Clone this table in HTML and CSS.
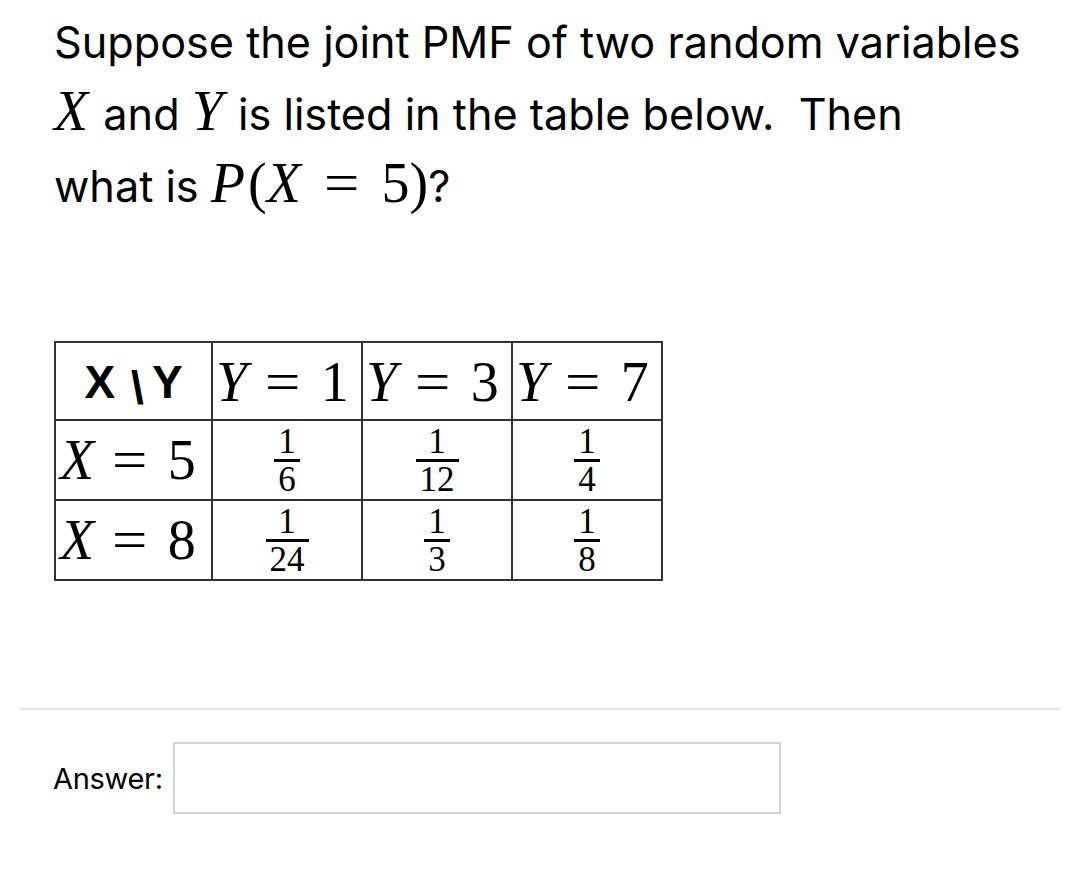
FILE: index.html
```html
<!DOCTYPE html>
<html>
<head>
<meta charset="utf-8">
<link rel="stylesheet" href="styles.css">
</head>
<body>
<div class="question">
  <p class="prompt">Suppose the joint PMF of two random variables <span class="m">X</span> and <span class="m">Y</span> is listed in the table below.&nbsp; Then <span class="ask">what is <span class="m">P</span><span class="mr">(</span><span class="m">X</span><span class="eq">=</span><span class="mr">5)</span>?</span></p>
  <table class="pmf">
    <colgroup>
      <col class="c1"><col class="c2"><col class="c3"><col class="c4">
    </colgroup>
    <tr>
      <th class="corner"><span class="cx">X</span><span class="bs">\</span><span>Y</span></th>
      <th class="colh"><span class="m">Y</span><span class="eq">=</span><span class="mr">1</span></th>
      <th class="colh"><span class="m">Y</span><span class="eq">=</span><span class="mr">3</span></th>
      <th class="colh"><span class="m">Y</span><span class="eq">=</span><span class="mr">7</span></th>
    </tr>
    <tr>
      <td class="rowh"><span class="m">X</span><span class="eq">=</span><span class="mr">5</span></td>
      <td><span class="frac"><span class="num">1</span><span class="den">6</span></span></td>
      <td><span class="frac"><span class="num">1</span><span class="den">12</span></span></td>
      <td><span class="frac"><span class="num">1</span><span class="den">4</span></span></td>
    </tr>
    <tr>
      <td class="rowh"><span class="m">X</span><span class="eq">=</span><span class="mr">8</span></td>
      <td><span class="frac"><span class="num">1</span><span class="den">24</span></span></td>
      <td><span class="frac"><span class="num">1</span><span class="den">3</span></span></td>
      <td><span class="frac"><span class="num">1</span><span class="den">8</span></span></td>
    </tr>
  </table>
</div>
<hr class="divider">
<div class="answer">
  <label class="answer-label">Answer:</label>
  <div class="answer-box"></div>
</div>
</body>
</html>
```
FILE: styles.css
```css
html, body {
  margin: 0;
  padding: 0;
  background: #fff;
  color: #000;
}
body {
  font-family: Inter, "Liberation Sans", sans-serif;
}
.question {
  padding: 6px 0 0 54px;
}
.prompt {
  margin: 0;
  width: 1000px;
  font-size: 43.2px;
  line-height: 72px;
}
.ask {
  white-space: nowrap;
}
.m, .mr, .eq {
  font-family: "Liberation Serif", serif;
  font-size: 56px;
  line-height: 1;
}
.m {
  font-style: italic;
  padding-right: 3px;
}
.eq {
  display: inline-block;
  margin: 0 24px 0 22px;
  transform: scaleX(1.12);
}
.pmf {
  margin-top: 119px;
  border-collapse: collapse;
  border: 2px solid #333;
  table-layout: fixed;
  width: 609px;
}
.c1 { width: 157px; }
.c2 { width: 150px; }
.c3 { width: 150px; }
.c4 { width: 150px; }
.pmf th, .pmf td {
  border: 2px solid #333;
  padding: 0;
  text-align: center;
  vertical-align: middle;
  white-space: nowrap;
  overflow: visible;
}
.pmf tr:first-child th { height: 75px; padding-top: 1px; }
.pmf td { height: 78px; }
.pmf th {
  font-weight: normal;
}
.pmf th .m, .pmf td .m { padding-right: 0; }
.pmf th .eq, .pmf td .eq { margin: 0 22px 0 20px; }
.pmf .colh {
  text-align: left;
  padding-left: 3px;
}
.corner {
  font-family: "Liberation Sans", sans-serif;
  font-weight: bold !important;
  font-size: 46px;
}
.cx {
  margin-right: 16px;
}
.bs {
  display: inline-block;
  margin-right: 8px;
  transform: translateY(6px);
}
.rowh {
  text-align: left !important;
  padding-left: 4px !important;
}
.frac {
  display: inline-flex;
  flex-direction: column;
  align-items: center;
  font-family: "Liberation Serif", serif;
  font-size: 35px;
  line-height: 35px;
  vertical-align: middle;
}
.num {
  padding: 0 4px;
}
.den {
  border-top: 3px solid #000;
  padding: 0 4px;
  align-self: stretch;
  text-align: center;
}
.divider {
  margin: 127px 26px 0 20px;
  border: 0;
  border-top: 2px solid #e6e6e6;
  height: 0;
}
.answer {
  display: flex;
  align-items: center;
  padding: 32px 0 0 53px;
}
.answer-label {
  font-family: Inter, "Liberation Sans", sans-serif;
  font-size: 29px;
  letter-spacing: -0.3px;
  width: 120px;
}
.answer-box {
  width: 604px;
  height: 68px;
  border: 2px solid #d2d2d7;
  background: #fff;
}
```
